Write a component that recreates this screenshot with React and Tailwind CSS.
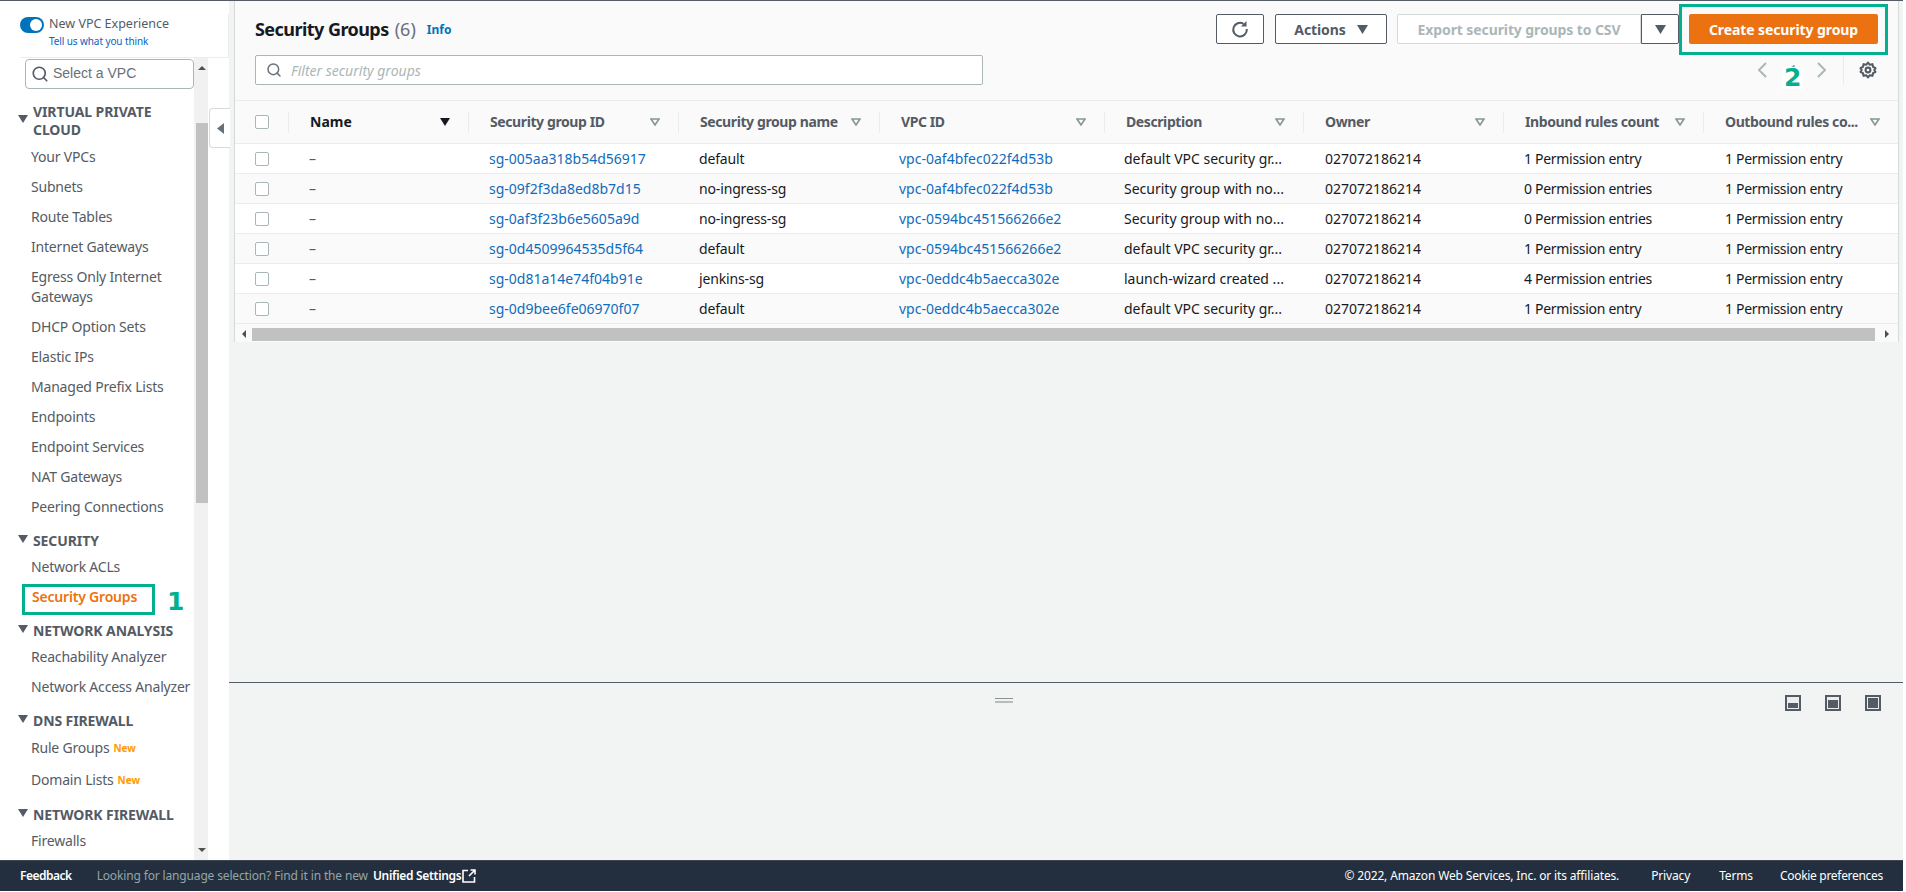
import { Search } from 'lucide-react';

const navTop = ['Your VPCs', 'Subnets', 'Route Tables', 'Internet Gateways'];
const navMid = ['DHCP Option Sets', 'Elastic IPs', 'Managed Prefix Lists', 'Endpoints', 'Endpoint Services', 'NAT Gateways', 'Peering Connections'];

const rows = [
    ['sg-005aa318b54d56917', 'default', 'vpc-0af4bfec022f4d53b', 'default VPC security gr...', '1 Permission entry'],
    ['sg-09f2f3da8ed8b7d15', 'no-ingress-sg', 'vpc-0af4bfec022f4d53b', 'Security group with no...', '0 Permission entries'],
    ['sg-0af3f23b6e5605a9d', 'no-ingress-sg', 'vpc-0594bc451566266e2', 'Security group with no...', '0 Permission entries'],
    ['sg-0d4509964535d5f64', 'default', 'vpc-0594bc451566266e2', 'default VPC security gr...', '1 Permission entry'],
    ['sg-0d81a14e74f04b91e', 'jenkins-sg', 'vpc-0eddc4b5aecca302e', 'launch-wizard created ...', '4 Permission entries'],
    ['sg-0d9bee6fe06970f07', 'default', 'vpc-0eddc4b5aecca302e', 'default VPC security gr...', '1 Permission entry'],
];

const columns = ['Security group ID', 'Security group name', 'VPC ID', 'Description', 'Owner', 'Inbound rules count'];

const gridCols = 'grid grid-cols-[54px_180px_210px_201px_225px_199px_200px_200px_194px]';

function Caret() {
    return (
        <svg width="10" height="8" viewBox="0 0 10 8" className="shrink-0">
            <path d="M0 0h10L5 8z" fill="#545b64" />
        </svg>
    );
}

function Heading({ children, first }) {
    return (
        <div className={`relative pl-[33px] pr-2 text-[14px] leading-[18px] font-bold tracking-[-0.1px] text-[#545b64] ${first ? 'mt-[14px]' : 'mt-[10px]'}`}>
            <span className={`absolute left-[18px] ${first ? 'top-[12px]' : 'top-[3px]'}`}><Caret /></span>
            {children}
        </div>
    );
}

function NavItem({ children, active }) {
    return (
        <div className={`h-[30px] pb-[2px] flex items-center text-[14px] tracking-[-0.2px] whitespace-nowrap ${active ? 'pl-[32px] font-semibold text-[#ec7211]' : 'pl-[31px] text-[#545b64]'}`}>
            {children}
        </div>
    );
}

function Sidebar() {
    return (
        <div className="w-[229px] shrink-0 bg-white flex flex-col relative">
            <div className="absolute right-0 top-[13px] h-[43px] w-px bg-[#eaeded]" />
            <div className="h-[57px] ml-[20px] border-b border-[#eaeded] relative shrink-0">
                <div className="absolute left-0 top-[16px] w-[24px] h-[16px] rounded-full bg-[#0073bb] flex items-center justify-end pr-[2px]">
                    <div className="w-[12px] h-[12px] rounded-full bg-white" />
                </div>
                <div className="pl-[29px] pt-[14px] text-[12.5px] leading-[18px] text-[#545b64] whitespace-nowrap">New VPC Experience</div>
                <div className="pl-[29px] text-[10px] leading-[16px] text-[#0a5fc4] tracking-[-0.1px] whitespace-nowrap">Tell us what you think</div>
            </div>
            <div className="flex flex-1 min-h-0">
                <div className="w-[194px] shrink-0 overflow-hidden">
                    <div className="ml-[25px] mt-px w-[169px] h-[30px] border border-[#aab7b8] rounded-[4px] flex items-center pl-[5px] pb-px gap-[4px] text-[14px] text-[#687078] font-['Liberation_Sans',sans-serif]">
                        <Search size={18} strokeWidth={2.2} color="#545b64" />
                        <span>Select a VPC</span>
                    </div>
                    <Heading first>VIRTUAL PRIVATE CLOUD</Heading>
                    <div className="mt-[3px]">
                        {navTop.map((n) => <NavItem key={n}>{n}</NavItem>)}
                        <div className="py-[5px] pl-[31px] text-[14px] leading-[20px] tracking-[-0.2px] text-[#545b64]">Egress Only Internet Gateways</div>
                        {navMid.map((n) => <NavItem key={n}>{n}</NavItem>)}
                    </div>
                    <Heading>SECURITY</Heading>
                    <div className="mt-[2px]">
                        <NavItem>Network ACLs</NavItem>
                        <NavItem active>Security Groups</NavItem>
                    </div>
                    <Heading>NETWORK ANALYSIS</Heading>
                    <div className="mt-[2px]">
                        <NavItem>Reachability Analyzer</NavItem>
                        <NavItem>Network Access Analyzer</NavItem>
                    </div>
                    <Heading>DNS FIREWALL</Heading>
                    <div className="mt-[2px]">
                        <div className="h-[32px] pb-[2px] flex items-center pl-[31px] text-[14px] tracking-[-0.2px] text-[#545b64]">
                            Rule Groups<span className="ml-[4px] text-[10px] tracking-normal font-bold text-[#ff9900] mt-[2px]">New</span>
                        </div>
                        <div className="h-[32px] pb-[2px] flex items-center pl-[31px] text-[14px] tracking-[-0.2px] text-[#545b64]">
                            Domain Lists<span className="ml-[4px] text-[10px] tracking-normal font-bold text-[#ff9900] mt-[2px]">New</span>
                        </div>
                    </div>
                    <Heading>NETWORK FIREWALL</Heading>
                    <div className="mt-[2px]">
                        <NavItem>Firewalls</NavItem>
                    </div>
                </div>
                <div className="w-[14px] shrink-0 bg-[#f1f1f1] flex flex-col relative">
                    <div className="h-[65px] flex justify-center pt-[8px] pl-[2px]">
                        <svg width="8" height="4" viewBox="0 0 8 4"><path d="M0 4h8L4 0z" fill="#505050" /></svg>
                    </div>
                    <div className="ml-[2px] h-[380px] bg-[#c1c1c1]" />
                    <div className="mt-auto h-[14px] flex justify-center pl-[2px] pt-[2px]">
                        <svg width="8" height="4" viewBox="0 0 8 4"><path d="M0 0h8L4 4z" fill="#505050" /></svg>
                    </div>
                </div>
            </div>
            {/* collapse tab */}
            <div className="absolute left-[209px] top-[107px] w-[21px] h-[40px] bg-white border border-r-0 border-[#d5dbdb] rounded-l-[4px] flex items-center justify-center z-10">
                <svg width="7" height="11" viewBox="0 0 7 11"><path d="M7 0v11L0 5.5z" fill="#687078" /></svg>
            </div>
        </div>
    );
}

function FilterIcon() {
    return (
        <svg width="10" height="8" viewBox="0 0 10 8" className="shrink-0">
            <path d="M1 1h8L5 7z" fill="none" stroke="#879596" strokeWidth="1.6" />
        </svg>
    );
}

function HeadCell({ label, last }) {
    return (
        <div className="flex items-center pl-[21px] min-w-0">
            <span className="flex-1 pb-[2px] text-[14px] font-bold tracking-[-0.4px] text-[#545b64] whitespace-nowrap">{label}</span>
            <FilterIcon />
            <span className="w-[18px]" />
            {!last && <span className="w-px h-[21px] bg-[#eaeded]" />}
        </div>
    );
}

function Checkbox() {
    return <div className="ml-[20px] w-[14px] h-[14px] rounded-[2px] border border-[#aab7b8] bg-white" />;
}

function Table() {
    return (
        <div>
            <div className={`${gridCols} h-[42px] border-b border-[#eaeded] bg-[#fafafa] box-content`}>
                <div className="flex items-center">
                    <div className="flex-1"><Checkbox /></div>
                    <span className="w-px h-[21px] bg-[#eaeded]" />
                </div>
                <div className="flex items-center pl-[21px]">
                    <span className="flex-1 pb-[2px] text-[14px] font-bold text-[#16191f]">Name</span>
                    <svg width="10" height="8" viewBox="0 0 10 8" className="shrink-0"><path d="M0 0h10L5 8z" fill="#16191f" /></svg>
                    <span className="w-[18px]" />
                    <span className="w-px h-[21px] bg-[#eaeded]" />
                </div>
                {columns.map((c) => <HeadCell key={c} label={c} />)}
                <HeadCell label="Outbound rules co..." last />
            </div>
            {rows.map((r, i) => (
                <div key={r[0]} className={`${gridCols} h-[29px] box-content border-b border-[#eaeded] text-[14px] text-[#16191f] items-center whitespace-nowrap ${i % 2 === 1 ? 'bg-[#fafafa]' : 'bg-white'}`}>
                    <Checkbox />
                    <div className="pl-[20px] text-[#545b64]">–</div>
                    <div className="pl-[20px] text-[#0f6cbd]">{r[0]}</div>
                    <div className="pl-[20px] tracking-[-0.15px]">{r[1]}</div>
                    <div className="pl-[19px] text-[#0f6cbd]">{r[2]}</div>
                    <div className="pl-[19px]">{r[3]}</div>
                    <div className="pl-[21px]">027072186214</div>
                    <div className="pl-[20px] tracking-[-0.3px]">{r[4]}</div>
                    <div className="pl-[21px] tracking-[-0.3px]">1 Permission entry</div>
                </div>
            ))}
            <div className="h-[18px] flex items-center pt-[2px]">
                <div className="w-[17px] flex justify-center">
                    <svg width="4" height="8" viewBox="0 0 4 8"><path d="M4 0v8L0 4z" fill="#505050" /></svg>
                </div>
                <div className="w-[1623px] h-[13px] bg-[#c1c1c1]" />
                <div className="flex-1 flex justify-center">
                    <svg width="4" height="8" viewBox="0 0 4 8"><path d="M0 0v8l4-4z" fill="#505050" /></svg>
                </div>
            </div>
        </div>
    );
}

function Toolbar() {
    return (
        <div className="h-[99px] pl-[20px] pr-[20px] flex justify-between">
            <div>
                <div className="mt-[16px] h-[24px] flex items-center whitespace-nowrap">
                    <span className="text-[18px] font-bold tracking-[-0.55px] text-[#16191f]">Security Groups</span>
                    <span className="ml-[6px] text-[18px] text-[#687078]">(6)</span>
                    <span className="ml-[11px] mt-[2px] text-[12px] font-bold text-[#0073bb]">Info</span>
                </div>
                <div className="mt-[14px] w-[728px] h-[30px] bg-white border border-[#aab7b8] rounded-[2px] flex items-center pl-[10px] gap-[9px]">
                    <Search size={16} strokeWidth={2.2} color="#687078" />
                    <span className="text-[14px] italic text-[#aab7b8]">Filter security groups</span>
                </div>
            </div>
            <div>
                <div className="mt-[13px] h-[30px] flex text-[14px] font-bold tracking-[-0.1px]">
                    <div className="w-[48px] border border-[#545b64] rounded-[2px] bg-white flex items-center justify-center">
                        <svg width="18" height="18" viewBox="0 0 18 18" fill="none" stroke="#545b64" strokeWidth="2">
                            <path d="M12.500 3.800A6.800 6.800 0 1 0 15.800 9" />
                            <path d="M15.500 1v5.500H10z" fill="#545b64" stroke="none" />
                        </svg>
                    </div>
                    <div className="ml-[11px] w-[112px] border border-[#545b64] rounded-[2px] bg-white flex items-center justify-center gap-[11px] text-[#545b64]">
                        Actions
                        <svg width="11" height="9" viewBox="0 0 11 9"><path d="M0 0h11L5.500 9z" fill="#545b64" /></svg>
                    </div>
                    <div className="ml-[10px] w-[244px] border border-[#d5dbdb] rounded-l-[2px] bg-white flex items-center justify-center text-[#aab7b8]">
                        Export security groups to CSV
                    </div>
                    <div className="w-[38px] border border-[#545b64] rounded-r-[2px] bg-white flex items-center justify-center">
                        <svg width="11" height="9" viewBox="0 0 11 9"><path d="M0 0h11L5.500 9z" fill="#545b64" /></svg>
                    </div>
                    <div className="ml-[10px] w-[189px] rounded-[2px] bg-[#ec7211] flex items-center justify-center text-white">
                        Create security group
                    </div>
                </div>
                <div className="mt-[11px] h-[30px] flex items-center justify-end pr-px">
                    <svg width="12" height="18" viewBox="0 0 12 18" fill="none" stroke="#aab7b8" strokeWidth="2"><path d="M10 2L3 9l7 7" /></svg>
                    <span className="ml-[22px] text-[12px] leading-none text-[#879596]">1</span>
                    <svg width="12" height="18" viewBox="0 0 12 18" fill="none" stroke="#aab7b8" strokeWidth="2" className="ml-[19px]"><path d="M2 2l7 7-7 7" /></svg>
                    <span className="ml-[15px] w-px h-[29px] bg-[#eaeded]" />
                    <svg width="18" height="18" viewBox="0 0 24 24" fill="none" stroke="#545b64" strokeWidth="2.800" className="ml-[15px]">
                        <circle cx="12" cy="12" r="3.200" />
                        <path d="M12 2l2.200 3 3.600-.8 1 3.600 3.200 1.800L20.400 12l1.600 2.400-3.200 1.800-1 3.600-3.600-.8L12 22l-2.200-3-3.600.8-1-3.600L2 14.400 3.600 12 2 9.600l3.200-1.800 1-3.600 3.600.8z" strokeLinejoin="round" />
                    </svg>
                </div>
            </div>
        </div>
    );
}

function PaneIcon({ fillY }) {
    return (
        <svg width="16" height="16" viewBox="0 0 16 16">
            <rect x="0" y="0" width="16" height="16" fill="#545b64" />
            <rect x="2" y="2" width="12" height="12" fill="#eaeded" />
            <rect x="3" y={fillY} width="10" height={13 - fillY} fill="#545b64" />
        </svg>
    );
}

function Footer() {
    return (
        <div className="h-[31px] shrink-0 border-t border-[#414750] bg-[#232f3e] text-[12px] tracking-[-0.15px] flex items-center text-white whitespace-nowrap">
            <span className="ml-[20px] font-semibold tracking-[-0.5px]">Feedback</span>
            <span className="ml-[25px] text-[#95a5a6]">Looking for language selection? Find it in the new</span>
            <span className="ml-[5px] font-semibold tracking-[-0.3px]">Unified Settings</span>
            <svg width="14" height="14" viewBox="0 0 14 14" fill="none" stroke="#fff" strokeWidth="1.600" className="ml-px">
                <path d="M6 1.500H1v11.500h11.500V8" />
                <path d="M7 7l6-6M8.500 1H13v4.500" />
            </svg>
            <span className="ml-auto">© 2022, Amazon Web Services, Inc. or its affiliates.</span>
            <span className="ml-[32px]">Privacy</span>
            <span className="ml-[29px]">Terms</span>
            <span className="ml-[27px] mr-[20px] tracking-[-0.3px]">Cookie preferences</span>
        </div>
    );
}

export default function App() {
    return (
        <div className="relative w-[1906px] h-[892px] bg-white overflow-hidden font-['Noto_Sans',sans-serif]">
            <div className="w-[1903px] h-[891px] flex flex-col">
                <div className="h-px shrink-0 bg-[#545b64]" />
                <div className="flex flex-1 min-h-0">
                    <Sidebar />
                    <div className="flex-1 min-w-0 bg-[#f2f3f3] flex flex-col">
                        <div className="ml-[5px] mr-[4px] h-[341px] shrink-0 border-x border-[#d5dbdb] bg-[#fafafa]">
                            <Toolbar />
                            <div className="h-px bg-[#eaeded]" />
                            <Table />
                        </div>
                        <div className="mt-[340px] border-t border-[#545b64] flex-1 relative flex justify-end pr-[22px] pt-[12px] gap-[24px]">
                            <div className="absolute left-[766px] top-[15px] w-[18px] h-px bg-[#879596]" />
                            <div className="absolute left-[766px] top-[18px] w-[18px] h-[2px] bg-[#bbbbbb]" />
                            <PaneIcon fillY={8} />
                            <PaneIcon fillY={5} />
                            <PaneIcon fillY={3} />
                        </div>
                    </div>
                </div>
                <Footer />
            </div>

            {/* annotations on the screenshot */}
            <div className="absolute left-[22px] top-[584px] w-[133px] h-[31px] border-[3px] border-[#00b08f]" />
            <div className="absolute left-[167px] top-[588px] text-[25px] leading-[27px] font-bold text-[#00b08f] font-['DejaVu_Sans',sans-serif]">1</div>
            <div className="absolute left-[1679px] top-[4px] w-[209px] h-[51px] border-[3px] border-[#00b08f]" />
            <div className="absolute left-[1782px] top-[67px] px-[2px] text-[25px] leading-[22px] font-bold text-[#00b08f] bg-white font-['DejaVu_Sans',sans-serif]">2</div>
        </div>
    );
}
